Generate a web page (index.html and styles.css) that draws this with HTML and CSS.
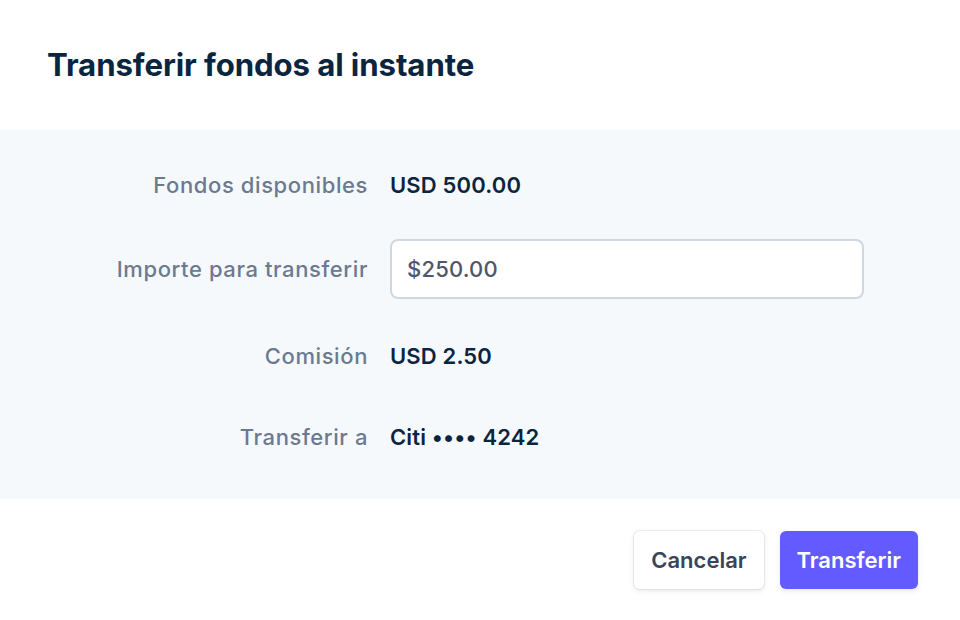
FILE: index.html
```html
<!DOCTYPE html>
<html lang="es">
<head>
  <meta charset="UTF-8">
  <title>Transferir fondos al instante</title>
  <link rel="stylesheet" href="styles.css">
</head>
<body>
  <div class="dialog">
    <!-- Cabecera -->
    <div class="dialog-header">
      <h1>Transferir fondos al instante</h1>
    </div>

    <!-- Detalles de la transferencia -->
    <div class="dialog-body">
      <div class="row">
        <span class="label">Fondos disponibles</span>
        <span class="value">USD 500.00</span>
      </div>
      <div class="row">
        <label class="label" for="amount">Importe para transferir</label>
        <input type="text" id="amount" class="amount" value="$250.00">
      </div>
      <div class="row row-fee">
        <span class="label">Comisión</span>
        <span class="value">USD 2.50</span>
      </div>
      <div class="row">
        <span class="label">Transferir a</span>
        <span class="value">Citi •••• 4242</span>
      </div>
    </div>

    <!-- Acciones -->
    <div class="dialog-footer">
      <button class="btn btn-secondary">Cancelar</button>
      <button class="btn btn-primary">Transferir</button>
    </div>
  </div>
</body>
</html>
```

FILE: styles.css
```css
/* Diálogo de transferencia */
body {
  margin: 0;
  background: #fff;
  font-family: Inter, "Noto Sans", sans-serif;
  color: #0a2540;
}
.dialog {
  width: 960px;
  height: 620px;
  display: flex;
  flex-direction: column;
}
.dialog-header {
  height: 130px;
  padding: 0 47px;
  box-sizing: border-box;
  display: flex;
  align-items: center;
}
h1 {
  margin: 0;
  font-size: 31.2px;
  font-weight: 700;
  letter-spacing: -0.1px;
  color: #0a2540;
}
.dialog-body {
  background: #f6f9fc;
  padding: 25px 96px 32px 0;
  display: grid;
  row-gap: 24px;
}
.row {
  display: grid;
  grid-template-columns: 368px 1fr;
  column-gap: 22px;
  align-items: center;
  height: 60px;
}
.row-fee {
  margin-top: 3px;
  margin-bottom: -3px;
}
.label {
  text-align: right;
  font-size: 22px;
  font-weight: 500;
  letter-spacing: 0.6px;
  color: #6b7a90;
}
.value {
  font-size: 22px;
  font-weight: 600;
  letter-spacing: 0.15px;
  color: #0a2540;
}
.amount {
  height: 60px;
  box-sizing: border-box;
  padding: 0 15px;
  border: 2px solid #cfd7df;
  border-radius: 8px;
  background: #fff;
  font-family: inherit;
  font-size: 22px;
  font-weight: 500;
  letter-spacing: 0.2px;
  color: #4f566b;
  outline: none;
}
/* Botones */
.dialog-footer {
  flex: 1;
  display: flex;
  justify-content: flex-end;
  align-items: center;
  gap: 16px;
  padding: 0 42px;
}
.btn {
  height: 58px;
  padding: 0 17px;
  border: none;
  border-radius: 6px;
  font-family: inherit;
  font-size: 22px;
  font-weight: 600;
  cursor: pointer;
}
.btn-secondary {
  background: #fff;
  color: #3c4257;
  box-shadow: 0 0 0 1px rgba(60, 66, 87, 0.08), 0 2px 5px rgba(60, 66, 87, 0.12);
}
.btn-primary {
  background: #635bff;
  color: #fff;
  box-shadow: 0 2px 5px rgba(60, 66, 87, 0.12);
}
```
